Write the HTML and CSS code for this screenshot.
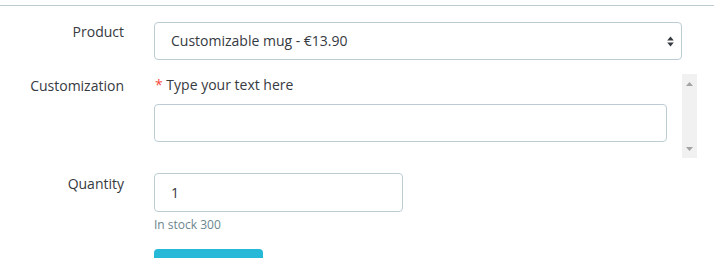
FILE: index.html
```html
<!DOCTYPE html>
<html lang="en">
<head>
<meta charset="utf-8">
<title>Add product</title>
<link rel="stylesheet" href="styles.css">
</head>
<body>
<div class="divider"></div>
<form class="form">
  <div class="row row-product">
    <label class="label label-product">Product</label>
    <div class="field">
      <div class="select">
        <span class="select-text">Customizable mug - €13.90</span>
        <svg class="select-arrows" width="7" height="11" viewBox="0 0 7 11" aria-hidden="true">
          <path d="M3.5 0.5 L6.8 4.6 L0.2 4.6 Z" fill="#363a41"/>
          <path d="M3.5 10.5 L6.8 6.4 L0.2 6.4 Z" fill="#363a41"/>
        </svg>
      </div>
    </div>
  </div>
  <div class="row row-custom">
    <label class="label label-custom">Customization</label>
    <div class="field">
      <div class="custom-box">
        <div class="custom-content">
          <div class="custom-title"><span class="required">*</span> Type your text here</div>
          <textarea class="textarea"></textarea>
        </div>
        <div class="scrollbar" aria-hidden="true">
          <svg class="scroll-arrow" width="7" height="4" viewBox="0 0 7 4"><path d="M3.5 0 L7 4 L0 4 Z" fill="#a3a3a3"/></svg>
          <svg class="scroll-arrow" width="7" height="4" viewBox="0 0 7 4"><path d="M0 0 L7 0 L3.5 4 Z" fill="#a3a3a3"/></svg>
        </div>
      </div>
    </div>
  </div>
  <div class="row row-qty">
    <label class="label label-qty">Quantity</label>
    <div class="field">
      <input class="input-qty" type="text" value="1">
      <div class="stock">In stock 300</div>
      <button type="button" class="btn-primary"></button>
    </div>
  </div>
</form>
</body>
</html>
```

FILE: styles.css
```css
html, body {
  margin: 0;
  padding: 0;
  background: #ffffff;
}
body {
  font-family: "Open Sans", "Liberation Sans", sans-serif;
  font-size: 14px;
  line-height: 20px;
  color: #363a41;
  overflow: hidden;
}
.divider {
  margin-top: 5px;
  height: 1px;
  background: #bbcdd2;
}
.form {
  padding-top: 16px;
}
.row {
  display: grid;
  grid-template-columns: 124px 528px;
  column-gap: 30px;
  align-items: start;
}
.row-product { margin-bottom: 14px; }
.row-custom { margin-bottom: 15px; }
.label {
  text-align: right;
  white-space: nowrap;
  color: #363a41;
}
.label-product { padding-top: 0; }
.label-custom { padding-top: 2px; }
.label-qty { padding-top: 1px; }

.select {
  box-sizing: border-box;
  height: 38px;
  border: 1px solid #bbcdd2;
  border-radius: 4px;
  display: flex;
  align-items: center;
  justify-content: space-between;
  padding: 0 7px 0 16px;
  background: #fff;
}
.select-text {
  color: #363a41;
}
.select-arrows {
  display: block;
  margin-top: 1px;
}

.custom-box {
  width: 543px;
  height: 84px;
  display: flex;
}
.custom-content {
  flex: 1;
  padding-top: 1px;
}
.custom-title {
  color: #363a41;
  padding-left: 1px;
}
.required {
  color: #f54c3e;
}
.textarea {
  display: block;
  box-sizing: border-box;
  width: 513px;
  height: 38px;
  margin: 9px 0 0 0;
  border: 1px solid #bbcdd2;
  border-radius: 4px;
  resize: none;
  outline: none;
  font-family: inherit;
  font-size: 14px;
  padding: 8px 16px;
}
.scrollbar {
  width: 15px;
  background: #f1f1f1;
  display: flex;
  flex-direction: column;
  justify-content: space-between;
  align-items: center;
  padding: 8px 0 7px;
  box-sizing: border-box;
}
.scroll-arrow {
  display: block;
}

.input-qty {
  display: block;
  box-sizing: border-box;
  width: 249px;
  height: 39px;
  border: 1px solid #bbcdd2;
  border-radius: 4px;
  padding: 0 16px;
  font-family: inherit;
  font-size: 14px;
  color: #363a41;
  outline: none;
  margin: 0;
}
.stock {
  margin-top: 4px;
  font-size: 12px;
  line-height: 18px;
  color: #6c868e;
}
.btn-primary {
  display: block;
  margin-top: 15px;
  width: 109px;
  height: 38px;
  border: none;
  border-radius: 4px;
  background: #25b9d7;
  padding: 0;
}
```
